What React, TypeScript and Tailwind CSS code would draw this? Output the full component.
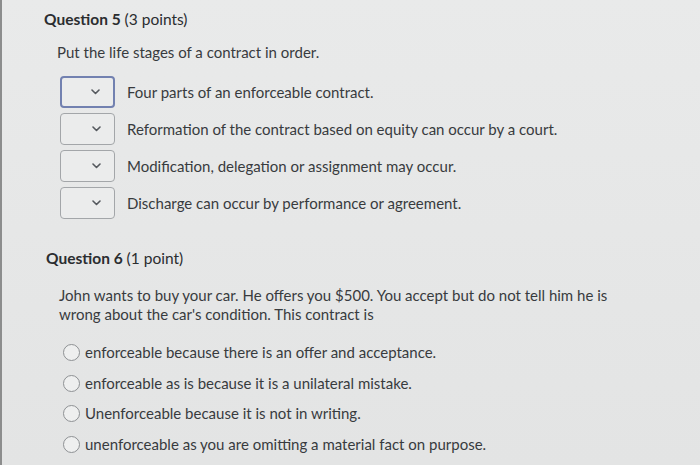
import React from 'react';

const stages = [
    'Four parts of an enforceable contract.',
    'Reformation of the contract based on equity can occur by a court.',
    'Modification, delegation or assignment may occur.',
    'Discharge can occur by performance or agreement.',
];

const options = [
    'enforceable because there is an offer and acceptance.',
    'enforceable as is because it is a unilateral mistake.',
    'Unenforceable because it is not in writing.',
    'unenforceable as you are omitting a material fact on purpose.',
];

const Chevron: React.FC = () => (
    <svg width="9" height="6" viewBox="0 0 9 6" fill="none">
        <path d="M1 1l3.5 3.5L8 1" stroke="#55595e" strokeWidth="1.6" strokeLinecap="round" strokeLinejoin="round" />
    </svg>
);

const App: React.FC = () => {
    return (
        <div
            className="w-[700px] h-[465px] overflow-hidden border-l-2 border-[#8c8d8d] bg-gradient-to-b from-[#e9eaea] to-[#e3e4e4] text-[#383b3e]"
            style={{ fontFamily: 'Lato, "Open Sans", sans-serif' }}
        >
            <div className="pl-[42px] pt-[8px]">
                <h2 className="text-[15.5px] leading-[22px] text-[#2b2d30]">
                    <span className="font-bold">Question 5</span> (3 points)
                </h2>
                <div className="pl-[13px] mt-[12px]">
                    <p className="text-[15px] leading-[20px]">Put the life stages of a contract in order.</p>
                    <div className="mt-[14px] flex flex-col gap-[5px] pl-[3px]">
                        {stages.map((s, i) => (
                            <div key={i} className="flex items-center h-[32px] gap-[12px]">
                                <div
                                    className={`w-[55px] h-[32px] rounded-[4px] bg-[#ebecec] flex items-center justify-end pr-[13px] ${
                                        i === 0 ? 'border-2 border-[#7281b0]' : 'border border-[#a3a6a9]'
                                    }`}
                                >
                                    <Chevron />
                                </div>
                                <span className="text-[15px] leading-[20px]">{s}</span>
                            </div>
                        ))}
                    </div>
                </div>

                <h2 className="mt-[28px] pl-[2px] text-[15.5px] leading-[22px] text-[#2b2d30]">
                    <span className="font-bold">Question 6</span> (1 point)
                </h2>
                <div className="pl-[15px] mt-[17px]">
                    <p className="text-[15px] leading-[19px] w-[560px]">
                        John wants to buy your car. He offers you $500. You accept but do not tell him he is wrong about the car's condition. This contract is
                    </p>
                    <div className="mt-[19px] flex flex-col gap-[11.5px] pl-[4px]">
                        {options.map((o, i) => (
                            <label key={i} className="flex items-center gap-[5px] h-[19px]">
                                <span className="w-[17px] h-[17px] rounded-full border border-[#8e9194] bg-[#eeefef]" />
                                <span className="text-[15px] leading-[19px]">{o}</span>
                            </label>
                        ))}
                    </div>
                </div>
            </div>
        </div>
    );
};

export default App;
